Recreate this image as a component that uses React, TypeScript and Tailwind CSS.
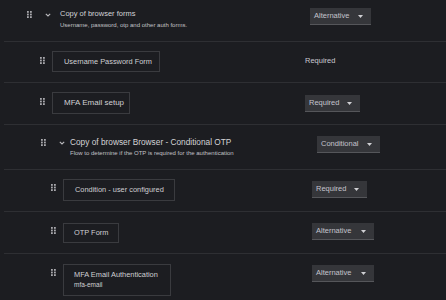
import React from "react";

const Drag = () => (
  <svg width="5" height="7" viewBox="0 0 5 7" className="block">
    {[0, 2.6, 5.2].map((y) => (
      <React.Fragment key={y}>
        <rect x="0" y={y} width="1.8" height="1.8" fill="#a9a9ad" />
        <rect x="3" y={y} width="1.8" height="1.8" fill="#a9a9ad" />
      </React.Fragment>
    ))}
  </svg>
);

const Chevron = () => (
  <svg width="6" height="4" viewBox="0 0 6 4" className="block">
    <path d="M0.8 0.8 L3 3 L5.2 0.8" stroke="#b9b9bd" strokeWidth="1.1" fill="none" />
  </svg>
);

const Dropdown = ({ label, w }: { label: string; w: string }) => (
  <div
    className={`flex h-[17px] items-center justify-between bg-[#35363a] border-b border-[#55565a] pl-[4px] pr-[8px] text-[7.5px] text-[#c4c3cc] whitespace-nowrap ${w}`}
  >
    <span>{label}</span>
    <svg width="5" height="3" viewBox="0 0 5 3" className="block">
      <path d="M0 0 L5 0 L2.5 3 Z" fill="#d0d0d4" />
    </svg>
  </div>
);

const Box = ({ children, cls }: { children: React.ReactNode; cls: string }) => (
  <div className={`border border-[#3a3b3f] text-[#d0d0d3] text-[7.4px] whitespace-nowrap ${cls}`}>{children}</div>
);

export default function App() {
  return (
    <div
      className="w-[446px] h-[300px] overflow-hidden bg-[#1c1d21] pl-[4px]"
      style={{ fontFamily: '"Liberation Sans", Arial, sans-serif' }}
    >
      {/* Row 1 */}
      <div className="flex h-[42px] border-b border-[#2e2f33]">
        <div className="w-[306px] flex pl-[23px] pt-[11px]">
          <Drag />
          <div className="ml-[13px] mt-[2px]"><Chevron /></div>
          <div className="ml-[9px] leading-none">
            <div className="text-[7.5px] text-[#d3d3d6] mt-[-1px] whitespace-nowrap">Copy of browser forms</div>
            <div className="text-[6px] text-[#c2c2c6] mt-[4px] whitespace-nowrap">Username, password, otp and other auth forms.</div>
          </div>
        </div>
        <div className="pt-[8px]"><Dropdown label="Alternative" w="w-[61px]" /></div>
      </div>

      {/* Row 2 */}
      <div className="flex h-[41px] border-b border-[#2e2f33]">
        <div className="w-[301px] flex pl-[36px] pt-[9px]">
          <div className="mt-[6px]"><Drag /></div>
          <Box cls="ml-[7px] h-[21px] w-[108px] flex items-center pl-[11px]">Username Password Form</Box>
        </div>
        <div className="pt-[13px] text-[7.5px] text-[#c8c7d0]">Required</div>
      </div>

      {/* Row 3 */}
      <div className="flex h-[42px] border-b border-[#2e2f33]">
        <div className="w-[301px] flex pl-[36px] pt-[9px]">
          <div className="mt-[6px]"><Drag /></div>
          <Box cls="ml-[7px] h-[22px] w-[78px] flex items-center pl-[11px] text-[8px]">MFA Email setup</Box>
        </div>
        <div className="pt-[12px]"><Dropdown label="Required" w="w-[55px]" /></div>
      </div>

      {/* Row 4 */}
      <div className="flex h-[45px] border-b border-[#2e2f33]">
        <div className="w-[313px] flex pl-[37px] pt-[14px]">
          <Drag />
          <div className="ml-[13px] mt-[2px]"><Chevron /></div>
          <div className="ml-[5px] leading-none">
            <div className="text-[8.3px] text-[#d3d3d6] mt-[-1px] whitespace-nowrap">Copy of browser Browser - Conditional OTP</div>
            <div className="text-[6px] text-[#c2c2c6] mt-[4px] whitespace-nowrap">Flow to determine if the OTP is required for the authentication</div>
          </div>
        </div>
        <div className="pt-[11px]"><Dropdown label="Conditional" w="w-[63px]" /></div>
      </div>

      {/* Row 5 */}
      <div className="flex h-[42px] border-b border-[#2e2f33]">
        <div className="w-[308px] flex pl-[47px] pt-[9px]">
          <div className="mt-[5px]"><Drag /></div>
          <Box cls="ml-[7px] h-[22px] w-[112px] flex items-center pl-[11px]">Condition - user configured</Box>
        </div>
        <div className="pt-[11px]"><Dropdown label="Required" w="w-[55px]" /></div>
      </div>

      {/* Row 6 */}
      <div className="flex h-[42px] border-b border-[#2e2f33]">
        <div className="w-[308px] flex pl-[47px] pt-[11px]">
          <div className="mt-[4px]"><Drag /></div>
          <Box cls="ml-[7px] h-[20px] w-[56px] flex items-center pl-[10px]">OTP Form</Box>
        </div>
        <div className="pt-[11px]"><Dropdown label="Alternative" w="w-[62px]" /></div>
      </div>

      {/* Row 7 */}
      <div className="flex h-[46px]">
        <div className="w-[308px] flex pl-[47px] pt-[10px]">
          <div className="mt-[5px]"><Drag /></div>
          <Box cls="ml-[7px] h-[32px] w-[108px] pl-[10px] pt-[6px] leading-none">
            <div>MFA Email Authentication</div>
            <div className="text-[6.5px] mt-[4px]">mfa-email</div>
          </Box>
        </div>
        <div className="pt-[11px]"><Dropdown label="Alternative" w="w-[62px]" /></div>
      </div>
    </div>
  );
}
